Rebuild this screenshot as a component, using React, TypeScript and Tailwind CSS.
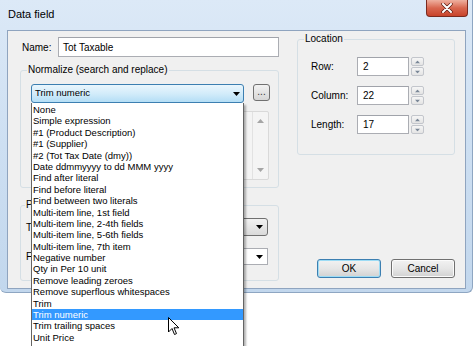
import React from "react";

const ITEMS = [
  "None",
  "Simple expression",
  "#1 (Product Description)",
  "#1 (Supplier)",
  "#2 (Tot Tax Date (dmy))",
  "Date ddmmyyyy to dd MMM yyyy",
  "Find after literal",
  "Find before literal",
  "Find between two literals",
  "Multi-item line, 1st field",
  "Multi-item line, 2-4th fields",
  "Multi-item line, 5-6th fields",
  "Multi-item line, 7th item",
  "Negative number",
  "Qty in Per 10 unit",
  "Remove leading zeroes",
  "Remove superflous whitespaces",
  "Trim",
  "Trim numeric",
  "Trim trailing spaces",
  "Unit Price",
];

function Arrow({ up = false, className = "" }: { up?: boolean; className?: string }) {
  return (
    <svg width="7" height="4" viewBox="0 0 7 4" className={className}>
      <path d={up ? "M0 4 L3.5 0 L7 4 Z" : "M0 0 L7 0 L3.5 4 Z"} fill="currentColor" />
    </svg>
  );
}

function Spinner() {
  return (
    <div className="ml-[2px] flex h-[19px] w-[13px] flex-col gap-[1px]">
      <div className="flex flex-1 items-center justify-center rounded-[2px] border border-[#c3c6cc] bg-gradient-to-b from-[#f6f6f6] to-[#e4e4e4] text-[#7a8797]">
        <Arrow up className="scale-75" />
      </div>
      <div className="flex flex-1 items-center justify-center rounded-[2px] border border-[#c3c6cc] bg-gradient-to-b from-[#f6f6f6] to-[#e4e4e4] text-[#7a8797]">
        <Arrow className="scale-75" />
      </div>
    </div>
  );
}

function NumRow({ label, value }: { label: string; value: string }) {
  return (
    <div className="flex h-[19px] items-center">
      <span className="w-[46px]">{label}</span>
      <div className="flex h-[19px] w-[52px] items-center border border-[#abadb3] border-t-[#a0a3aa] bg-white pl-[5px]">
        {value}
      </div>
      <Spinner />
    </div>
  );
}

function Group({ label, className = "", labelClass = "left-[6px] px-[1px]", children }: { label: string; className?: string; labelClass?: string; children?: React.ReactNode }) {
  return (
    <div className={"relative rounded-[3px] border border-[#d5dfe5] " + className}>
      <span className={"absolute -top-[7px] bg-[#f0f0f0] leading-[12px] " + labelClass}>{label}</span>
      {children}
    </div>
  );
}

function WinButton({ label, focused = false }: { label: string; focused?: boolean }) {
  return (
    <div
      className={
        "flex h-[19px] w-[64px] items-center justify-center rounded-[3px] border bg-gradient-to-b from-[#f2f2f2] via-[#e6e6e6] to-[#d2d2d2] " +
        (focused ? "border-[#3c7fb1] shadow-[inset_0_0_0_1px_#9ddcf5]" : "border-[#707070] shadow-[inset_0_0_0_1px_#fbfbfb]")
      }
    >
      {label}
    </div>
  );
}

export default function App() {
  return (
    <div className="relative h-[346px] w-[474px] overflow-hidden bg-white font-['Liberation_Sans',Arial,sans-serif] text-[10px] text-black">
      <div className="flex h-[293px] w-[473px] flex-col rounded-b-[6px] border-r border-b border-[#8ea6c2] bg-gradient-to-b from-[#dce9f7] via-[#cddff2] to-[#c2d7ed]">
        <div className="flex h-[30px] items-start justify-between">
          <span className="pl-[8px] pt-[8px] text-[11px] leading-[13px]">Data field</span>
          <div className="mr-[4px] flex h-[17px] w-[42px] items-center justify-center rounded-b-[4px] border border-t-0 border-[#7a2a1f] bg-gradient-to-b from-[#eeb0a0] via-[#d8664f] to-[#c8432a]">
            <svg width="12" height="10" viewBox="0 0 12 10">
              <path d="M2 1 L10 9 M10 1 L2 9" stroke="#5a1a10" strokeWidth="3.4" strokeLinecap="round" />
              <path d="M2 1 L10 9 M10 1 L2 9" stroke="#ffffff" strokeWidth="2" strokeLinecap="round" />
            </svg>
          </div>
        </div>
        <div className="ml-[7px] mr-[6px] flex h-[259px] border border-[#8fa4bf] bg-[#f0f0f0]">
          <div className="ml-[12px] flex w-[259px] flex-col pt-[6px]">
            <div className="flex h-[20px] items-center">
              <span className="ml-[2px] w-[36px]">Name:</span>
              <div className="flex h-[20px] flex-1 items-center border border-[#abadb3] border-t-[#a0a3aa] bg-white pl-[4px]">
                Tot Taxable
              </div>
            </div>
            <Group label="Normalize (search and replace)" className="mt-[13px] h-[118px]">
              <div className="flex pl-[10px] pt-[13px]">
                <div className="h-[18px] w-[212px]" />
                <div className="ml-[10px] flex h-[17px] w-[17px] items-center justify-center rounded-[3px] border border-[#707070] bg-gradient-to-b from-[#f2f2f2] to-[#d6d6d6] pb-[3px] text-[#333]">
                  ...
                </div>
              </div>
              <div className="ml-[10px] mr-[9px] mt-[9px] flex h-[69px] justify-end rounded-[2px] border border-[#d9d9d9] bg-[#f4f4f4]">
                <div className="flex w-[16px] flex-col items-center justify-between border-l border-[#e2e2e2] py-[7px] text-[#a5a5a5]">
                  <Arrow up />
                  <Arrow />
                </div>
              </div>
            </Group>
            <Group label="P" labelClass="left-[4px] px-[1px]" className="mt-[17px] h-[76px]">
              <div className="flex flex-col gap-[12px] pl-[5px] pt-[12px] pr-[10px]">
                <div className="flex items-center">
                  <span className="w-[61px]">T</span>
                  <div className="flex h-[18px] flex-1 items-center justify-end rounded-[3px] border border-[#707070] bg-gradient-to-b from-[#f2f2f2] to-[#dadada] pr-[4px]">
                    <Arrow />
                  </div>
                </div>
                <div className="flex items-center">
                  <span className="w-[61px]">F</span>
                  <div className="flex h-[17px] flex-1 items-center justify-end border border-[#abadb3] bg-white pr-[4px]">
                    <Arrow />
                  </div>
                </div>
              </div>
            </Group>
          </div>
          <div className="ml-[18px] flex w-[158px] flex-col pt-[8px]">
            <Group label="Location" className="h-[116px]">
              <div className="flex flex-col gap-[10px] pl-[13px] pt-[17px]">
                <NumRow label="Row:" value="2" />
                <NumRow label="Column:" value="22" />
                <NumRow label="Length:" value="17" />
              </div>
            </Group>
            <div className="mt-[104px] flex justify-end gap-[10px]">
              <WinButton label="OK" focused />
              <WinButton label="Cancel" />
            </div>
          </div>
        </div>
      </div>

      {/* combo with its opened list, drawn over the dialog */}
      <div className="absolute left-[31px] top-[84px] w-[213px] text-[9.5px]">
        <div className="flex h-[19px] items-center justify-between rounded-[3px] border border-[#3c7fb1] bg-gradient-to-b from-[#eaf6fd] via-[#d3ecfa] to-[#b4def6] pl-[3px] pr-[3px]">
          <span>Trim numeric</span>
          <Arrow />
        </div>
        <div className="h-[260px] border border-t-0 border-[#646464] bg-white pt-[1px] shadow-[2px_2px_2px_rgba(0,0,0,0.3)]">
          {ITEMS.map((it) => (
            <div
              key={it}
              className={
                "h-[11.4px] whitespace-nowrap pl-[1px] leading-[11.4px] " +
                (it === "Trim numeric" ? "bg-[#3399ff] text-white" : "")
              }
            >
              {it}
            </div>
          ))}
        </div>
      </div>

      <svg className="absolute left-[168px] top-[317px]" width="12" height="19" viewBox="0 0 12 19">
        <path d="M0.5 0.5 L0.5 15 L4 11.5 L6.5 17.5 L8.5 16.6 L6 10.8 L10.8 10.8 Z" fill="white" stroke="black" strokeWidth="1" />
      </svg>
    </div>
  );
}
